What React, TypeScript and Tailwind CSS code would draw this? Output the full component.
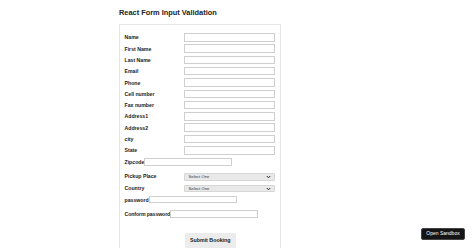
const tableFields = [
  "Name",
  "First Name",
  "Last Name",
  "Email",
  "Phone",
  "Cell number",
  "Fax number",
  "Address1",
  "Address2",
  "city",
  "State",
];

const labelClass = "text-[5.2px] font-bold leading-[6px] text-[#222]";
const inputClass = "box-border block border border-[#cfcfcf] bg-white";

function Chevron() {
  return (
    <svg width="5" height="4" viewBox="0 0 10 8" className="shrink-0">
      <path d="M1.5 2 L5 5.5 L8.5 2" fill="none" stroke="#222" strokeWidth="2" />
    </svg>
  );
}

function FakeSelect() {
  return (
    <div className="box-border flex h-[7.5px] w-[91.5px] items-center justify-between rounded-[1px] border border-[#d6d6d6] bg-[#e9e9e9] pl-[3.5px] pr-[3px]">
      <span className="text-[4.2px] leading-none text-[#333]">Select One</span>
      <Chevron />
    </div>
  );
}

export default function App() {
  return (
    <div
      className="relative h-[248px] w-[474px] overflow-hidden bg-white"
      style={{ fontFamily: '"Liberation Sans", Arial, sans-serif' }}
    >
      <div className="ml-[119px] w-[162px]">
        <h3 className="pt-[8px] text-[7.4px] font-bold leading-[9px] text-[#222]">React Form Input Validation</h3>

        <div className="mt-[6.7px] h-[260px] border border-[#e6e6e6] pl-[4.5px] pr-[5px] pt-[7px]">
          {tableFields.map((f) => (
            <div key={f} className="flex h-[11.3px] items-center">
              <label className={`${labelClass} w-[60px]`}>{f}</label>
              <input className={`${inputClass} h-[8.5px] w-[91.5px]`} />
            </div>
          ))}

          <div className="flex h-[12px] items-center">
            <label className={labelClass}>Zipcode</label>
            <input className={`${inputClass} h-[7.7px] w-[88px]`} />
          </div>

          <div className="mt-[5.5px] flex items-start">
            <label className={`${labelClass} w-[60px]`}>Pickup Place</label>
            <FakeSelect />
          </div>

          <div className="mt-[4px] flex items-start">
            <label className={`${labelClass} w-[60px]`}>Country</label>
            <FakeSelect />
          </div>

          <div className="mt-[3.5px] flex items-center">
            <label className={labelClass}>password</label>
            <input className={`${inputClass} h-[7.2px] w-[88px]`} />
          </div>

          <div className="mt-[7.2px] flex items-center">
            <label className={`${labelClass} tracking-[-0.1px]`}>Conform password</label>
            <input className={`${inputClass} h-[7.6px] w-[88px]`} />
          </div>

          <div className="mt-[15.4px] flex">
            <button className="ml-[60px] h-[15px] w-[51.5px] rounded-[1.5px] bg-[#ececec] text-[5.3px] font-bold text-[#222]">
              Submit Booking
            </button>
          </div>
        </div>
      </div>

      <button className="absolute bottom-[8px] right-[9px] flex h-[12px] w-[44px] items-center justify-center rounded-[2px] border border-[#444] bg-[#151515] text-[5px] text-white">
        Open Sandbox
      </button>
    </div>
  );
}
